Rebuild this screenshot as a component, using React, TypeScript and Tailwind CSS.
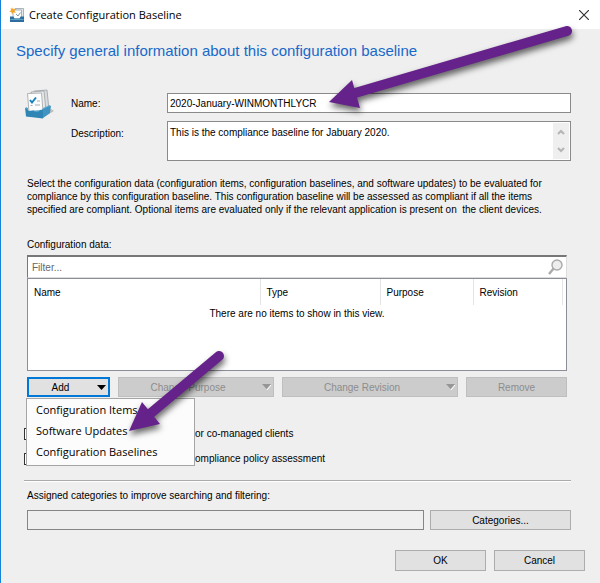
import React from "react";

const field = "border border-[#8a8a8a] bg-white";
const disabledButton =
  "relative h-5 border border-[#bfbfbf] bg-[#cccccc] text-[#8c8c8c]";
const plainButton = "border border-[#adadad] bg-[#e1e1e1] text-black";
const headCell = "border-r border-[#e4e4e4] px-1.5 font-normal";
const menuItem = "h-[21px] w-full pl-[9px] text-left";

function AppIcon() {
  return (
    <svg width="16" height="16" viewBox="0 0 16 16" aria-hidden="true">
      <path d="M6 1.5h8.5V11H6z" fill="#e3e7ea" stroke="#9aa3a9" strokeWidth=".8" />
      <path d="M4 3h8.5v9H4z" fill="#fff" stroke="#9aa3a9" strokeWidth=".8" />
      <path d="M7 7l2 2 2.5-3.5" fill="none" stroke="#7e97a8" />
      <path d="M1 9.5h3.5l1 2h5l1-2H15V15H1z" fill="#2d6e9e" />
      <path d="M1.5 12.5h13" stroke="#5ea3cc" />
      <path d="M3.5 0l1 2.3L7 1.8 5.5 3.8 7 6 4.4 5.3 3 7.5 2.4 5 0 4.4l2.2-1.2L1.5 1l2 .9z" fill="#f3a52b" />
    </svg>
  );
}

function BaselineIcon() {
  return (
    <svg width="30" height="32" viewBox="0 0 30 32" aria-hidden="true">
      <path d="M17 29l12-7-3-2-6 3z" fill="#bdbdbd" />
      <path d="M9 2l13-1 2 20-13 1z" fill="#d9dcde" stroke="#9da2a6" strokeWidth=".8" />
      <path d="M6 3l13-1 2 20-13 1z" fill="#eaecec" stroke="#9da2a6" strokeWidth=".8" />
      <path d="M2.500 4.500l14-.5 1.500 18-14 1z" fill="#fcfcfc" stroke="#9da2a6" strokeWidth=".8" />
      <path d="M5 11l2 2.500 4-5" fill="none" stroke="#1681bf" strokeWidth="2" />
      <path d="M12 12h3M5.500 16.500h2M10 16h5" stroke="#a6adb2" />
      <path d="M1 18l2 1v3l14-1 1-2 7-3v7l-7 5.500L1 27z" fill="#5aa6d0" />
      <path d="M0 18.500l4 3.500 5-.5 1 1.500 4-.5 1-1.500 3-.5v9L1 27.500z" fill="#2f86b5" />
      <path d="M18 20.500l8-4-1 7.500-7 5z" fill="#3f94c2" />
    </svg>
  );
}

function Caret({ disabled = false }: { disabled?: boolean }) {
  return (
    <svg width="9" height="6" viewBox="0 0 9 6" className="absolute right-0.5 top-1.5" aria-hidden="true">
      {disabled && <path d="M5 6l4-5" stroke="#fff" />}
      <path d="M0 0h9L4.5 5z" fill={disabled ? "#969696" : "#000"} />
    </svg>
  );
}

function Arrow({ shaft, head }: { shaft: string; head: string }) {
  return (
    <g fill="#66228b" stroke="#66228b">
      <path d={shaft} strokeWidth="10" strokeLinecap="round" />
      <path d={head} stroke="none" />
    </g>
  );
}

export default function App() {
  return (
    <main className="relative min-h-screen border-l border-[#1683d8] bg-[#efefef] font-['Liberation_Sans',Arial,sans-serif] text-[10px] leading-[13px] text-black">
      <header className="flex h-[29px] items-center bg-white px-2 font-['Open_Sans','Noto_Sans',sans-serif] text-[11px]">
        <AppIcon />
        <span className="ml-1 grow">Create Configuration Baseline</span>
        <button aria-label="Close" className="flex size-4 items-center justify-center">
          <svg width="10" height="10" viewBox="0 0 10 10" aria-hidden="true">
            <path d="M0 0l10 10M10 0L0 10" stroke="#333" strokeWidth="1.2" />
          </svg>
        </button>
      </header>

      <h1 className="px-[15px] pt-3 text-[15px] leading-5 text-[#1769ca]">
        Specify general information about this configuration baseline
      </h1>

      <form onSubmit={(e) => e.preventDefault()}>
        <section className="mt-7 flex pl-6 pr-[29px]">
          <BaselineIcon />
          <div className="ml-4 grid grow grid-cols-[96px_1fr] gap-y-2 pt-1">
            <label htmlFor="name" className="pt-1">Name:</label>
            <input id="name" defaultValue="2020-January-WINMONTHLYCR" className={`${field} h-5 w-full px-0.5`} />
            <label htmlFor="description" className="pt-1.5">Description:</label>
            <div className={`${field} flex h-10`}>
              <textarea id="description" defaultValue="This is the compliance baseline for Jabuary 2020." className="grow resize-none overflow-hidden px-0.5 pt-1" />
              <div className="my-px mr-px flex w-4 flex-col items-center justify-between bg-[#efefef] py-1.5" aria-hidden="true">
                <svg width="8" height="6" viewBox="0 0 8 6"><path d="M1 5l3-3 3 3" fill="none" stroke="#b5b5b5" strokeWidth="2" /></svg>
                <svg width="8" height="6" viewBox="0 0 8 6"><path d="M1 1l3 3 3-3" fill="none" stroke="#b5b5b5" strokeWidth="2" /></svg>
              </div>
            </div>
          </div>
        </section>

        <section className="pl-[26px] pr-[33px]">
          <p className="mt-4 whitespace-nowrap">
            Select the configuration data (configuration items, configuration baselines, and software updates) to be evaluated for
            <br />
            compliance by this configuration baseline. This configuration baseline will be assessed as compliant if all the items
            <br />
            specified are compliant. Optional items are evaluated only if the relevant application is present on&nbsp; the client devices.
          </p>
          <label htmlFor="filter" className="mt-[22px] block">Configuration data:</label>
          <div className="mt-1 flex h-[23px] items-center border border-t-2 border-[#dddddd] border-l-[#777] border-t-[#777] bg-white">
            <input id="filter" placeholder="Filter..." className="grow px-1 placeholder:text-[#666]" />
            <svg width="16" height="18" viewBox="0 0 16 18" className="mr-0.5" aria-hidden="true">
              <path d="M6 10l-5 6" stroke="#aaa" strokeWidth="2.4" />
              <circle cx="9" cy="7" r="5" fill="#ededed" stroke="#aaa" strokeWidth="1.4" />
            </svg>
          </div>
          <div className="h-[93px] border border-[#8b8d98] bg-white">
            <table className="w-full table-fixed text-left">
              <thead>
                <tr className="h-[26px]">
                  <th className={`${headCell} w-[232px]`}>Name</th>
                  <th className={`${headCell} w-[120px]`}>Type</th>
                  <th className={`${headCell} w-[93px]`}>Purpose</th>
                  <th className={headCell}>Revision</th>
                  <th className="w-1" />
                </tr>
              </thead>
              <tbody>
                <tr><td colSpan={5} className="pt-0.5 text-center">There are no items to show in this view.</td></tr>
              </tbody>
            </table>
          </div>
          <div className="mt-1.5 grid grid-cols-[83px_156px_176px_1fr] gap-x-2">
            <div className="relative">
              <button className="relative h-5 w-full border-2 border-[#0078d7] bg-[#e1e1e1] pr-4">Add<Caret /></button>
              <ul className="absolute -left-px top-[21px] z-10 w-[169px] border border-[#a5a5a5] bg-[#fcfcfc] pb-[3px] font-['Open_Sans','Noto_Sans',sans-serif] text-[11px]">
                <li><button className={menuItem}>Configuration Items</button></li>
                <li><button className={menuItem}>Software Updates</button></li>
                <li><button className={menuItem}>Configuration Baselines</button></li>
              </ul>
            </div>
            <button disabled className={`${disabledButton} pr-4`}>Change Purpose<Caret disabled /></button>
            <button disabled className={`${disabledButton} pr-4`}>Change Revision<Caret disabled /></button>
            <button disabled className={disabledButton}>Remove</button>
          </div>
        </section>

        <section className="ml-[23px] mr-[29px]">
          <div className="mt-[30px] flex flex-col gap-3 border-b border-[#aaa] pb-[15px]">
            <label className="flex h-[13px] items-center justify-start gap-[159px]">
              <input type="checkbox" className="size-3 appearance-none border border-[#333] bg-white" />
              or co-managed clients
            </label>
            <label className="flex h-[13px] items-center justify-start gap-[159px]">
              <input type="checkbox" className="size-3 appearance-none border border-[#333] bg-white" />
              ompliance policy assessment
            </label>
          </div>
          <div className="border-t border-white pl-[3px]">
            <label htmlFor="categories" className="block pt-[7px]">Assigned categories to improve searching and filtering:</label>
            <div className="mt-2 flex items-stretch gap-1.5">
              <input id="categories" readOnly className="h-5 grow border border-[#858585] bg-[#efefef]" />
              <button className={`${plainButton} w-[141px]`}>Categories...</button>
            </div>
          </div>
        </section>

        <footer className="mt-5 flex justify-end gap-2 pr-[15px]">
          <button className={`${plainButton} h-[21px] w-[91px]`}>OK</button>
          <button className={`${plainButton} h-[21px] w-[91px]`}>Cancel</button>
        </footer>
      </form>

      <svg width="600" height="480" viewBox="0 0 600 480" className="pointer-events-none absolute -left-px top-0 z-20 drop-shadow-[1px_4px_3px_rgba(0,0,0,0.6)]" aria-hidden="true">
        <Arrow shaft="M567 31L355 93" head="M329 102L352 80L360 108Z" />
        <Arrow shaft="M219 356L151 413" head="M129 431L142 402L160 424Z" />
      </svg>
    </main>
  );
}
